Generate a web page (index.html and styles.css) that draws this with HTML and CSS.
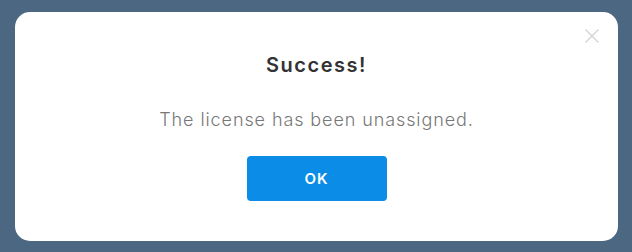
FILE: index.html
```html
<!DOCTYPE html>
<html>
<head>
<meta charset="utf-8">
<link rel="stylesheet" href="styles.css">
</head>
<body>
<div class="overlay">
  <div class="dialog">
    <button class="close" aria-label="Close">
      <svg width="16" height="16" viewBox="0 0 16 16"><path d="M1.5 1.5L14.5 14.5M14.5 1.5L1.5 14.5" stroke="#d6d6d6" stroke-width="1.5" fill="none"/></svg>
    </button>
    <h2 class="title">Success!</h2>
    <p class="message">The license has been unassigned.</p>
    <button class="ok">OK</button>
  </div>
</div>
</body>
</html>
```
FILE: styles.css
```css
html, body {
  margin: 0;
  padding: 0;
  width: 632px;
  height: 252px;
  overflow: hidden;
  background: #4b6781;
  font-family: "Inter", "Open Sans", sans-serif;
}
.overlay {
  padding: 12px 14px 11px 15px;
  box-sizing: border-box;
  height: 252px;
}
.dialog {
  position: relative;
  background: #fff;
  border-radius: 15px;
  height: 229px;
  box-sizing: border-box;
  padding-top: 40px;
  display: flex;
  flex-direction: column;
  align-items: center;
}
.close {
  position: absolute;
  top: 16px;
  right: 18px;
  border: 0;
  background: none;
  padding: 0;
  width: 16px;
  height: 16px;
  line-height: 0;
}
.title {
  margin: 0;
  font-size: 20px;
  line-height: 26px;
  font-weight: 600;
  color: #333;
  letter-spacing: 1.5px;
}
.message {
  margin: 30px 0 0;
  font-size: 18px;
  line-height: 24px;
  font-weight: 300;
  color: #777;
  letter-spacing: 0.9px;
}
.ok {
  margin-top: 24px;
  width: 140px;
  height: 45px;
  border: 0;
  border-radius: 4px;
  background: #0b8ce6;
  color: #fff;
  font-family: inherit;
  font-size: 15px;
  font-weight: 600;
  letter-spacing: 1px;
}
```
